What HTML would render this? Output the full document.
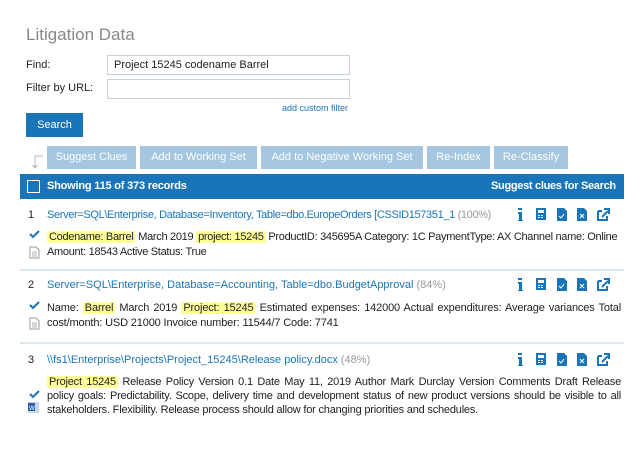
<!DOCTYPE html>
<html><head><meta charset="utf-8"><style>
body{margin:0;width:640px;height:450px;background:#fff;font-family:"Liberation Sans",sans-serif;font-size:11px;color:#222;position:relative;overflow:hidden}
.a{position:absolute;white-space:nowrap}
.inp{position:absolute;border:1px solid #c8d0d8;background:#fff;box-sizing:border-box}
.btn{position:absolute;top:146px;height:23px;background:#a4c6e0;color:#fff;font-size:11px;line-height:23px;text-align:center}
.lnk{color:#1a75b8}
.pct{color:#999}
.hl{background:#ffff99;padding:0 2px}
.txt{position:absolute;left:47px;width:574px;line-height:14.5px;text-align:justify;letter-spacing:-0.15px}
.sep{position:absolute;left:20px;width:604px;height:2px;background:#dbe6f1}
.ic{position:absolute}
</style></head><body>
<div class="a" style="left:26px;top:25px;font-size:17px;color:#888">Litigation Data</div>
<div class="a" style="left:26px;top:59px">Find:</div>
<div class="inp" style="left:107px;top:55px;width:243px;height:20px;padding:2px 6px;font-size:11px;line-height:14px">Project 15245 codename Barrel</div>
<div class="a" style="left:26px;top:82px">Filter by URL:</div>
<div class="inp" style="left:107px;top:79px;width:243px;height:20px"></div>
<div class="a lnk" style="left:282px;top:103px;font-size:9px">add custom filter</div>
<div class="a" style="left:26px;top:113px;width:57px;height:24px;background:#1a75b8;color:#fff;line-height:24px;text-align:center">Search</div>
<svg class="ic" style="left:29px;top:154px" width="16" height="16"><path d="M14 2H6V13" fill="none" stroke="#b0b8c0" stroke-width="1"/><path d="M3.5 11L6 14L8.5 11" fill="none" stroke="#b0b8c0"/></svg>
<div class="btn" style="left:47px;width:89px">Suggest Clues</div>
<div class="btn" style="left:140px;width:117px">Add to Working Set</div>
<div class="btn" style="left:261px;width:162px">Add to Negative Working Set</div>
<div class="btn" style="left:427px;width:63px">Re-Index</div>
<div class="btn" style="left:494px;width:74px">Re-Classify</div>
<div class="a" style="left:20px;top:174px;width:604px;height:25px;background:#1a75b8"></div>
<div class="a" style="left:27px;top:180px;width:11px;height:11px;border:1px solid #fff"></div>
<div class="a" style="left:47px;top:180px;color:#fff;font-weight:bold;font-size:11px;letter-spacing:-0.2px">Showing 115 of 373 records</div>
<div class="a" style="left:491px;top:180px;color:#fff;font-weight:bold;font-size:11px;letter-spacing:-0.3px">Suggest clues for Search</div>

<div class="a" style="left:28px;top:209px">1</div>
<div class="a lnk" style="left:47px;top:209px;letter-spacing:-0.35px">Server=SQL\Enterprise, Database=Inventory, Table=dbo.EuropeOrders [CSSID157351_1 <span class="pct">(100%)</span></div>
<div class="txt" style="top:230px;white-space:nowrap;letter-spacing:-0.3px"><span class="hl">Codename: Barrel</span> March 2019 <span class="hl">project: 15245</span> ProductID: 345695A Category: 1C PaymentType: AX Channel name: Online<br>Amount: 18543 Active Status: True</div>
<div class="sep" style="top:269px"></div>

<div class="a" style="left:28px;top:279px">2</div>
<div class="a lnk" style="left:47px;top:279px">Server=SQL\Enterprise, Database=Accounting, Table=dbo.BudgetApproval <span class="pct">(84%)</span></div>
<div class="txt" style="top:301px">Name: <span class="hl">Barrel</span> March 2019 <span class="hl">Project: 15245</span> Estimated expenses: 142000 Actual expenditures: Average variances Total cost/month: USD 21000 Invoice number: 11544/7 Code: 7741</div>
<div class="sep" style="top:342px"></div>

<div class="a" style="left:28px;top:354px">3</div>
<div class="a lnk" style="left:47px;top:354px">\\fs1\Enterprise\Projects\Project_15245\Release policy.docx <span class="pct">(48%)</span></div>
<div class="txt" style="top:375px;line-height:14px;letter-spacing:-0.2px"><span class="hl">Project 15245</span> Release Policy Version 0.1 Date May 11, 2019 Author Mark Durclay Version Comments Draft Release policy goals: Predictability. Scope, delivery time and development status of new product versions should be visible to all stakeholders. Flexibility. Release process should allow for changing priorities and schedules.</div>

<svg width="640" height="450" style="position:absolute;left:0;top:0;pointer-events:none">
<defs>
<g id="icons">
<path d="M518 2h4v2h-4zM518 6h4v8h1v1h-5v-1h1v-6h-1z" fill="#1a75b8"/>
<rect x="536" y="2" width="10" height="12" fill="#1a75b8"/><rect x="538" y="4" width="6" height="3" fill="#fff"/><rect x="538" y="9" width="2" height="1" fill="#fff"/><rect x="541" y="9" width="2" height="1" fill="#fff"/><rect x="538" y="11" width="2" height="1" fill="#fff"/><rect x="541" y="11" width="2" height="1" fill="#fff"/>
<path d="M557 2h7l3 3v10h-10z" fill="#1a75b8"/><path d="M559 10l2 2 3-4" stroke="#fff" fill="none"/>
<path d="M577 2h7l3 3v10h-10z" fill="#1a75b8"/><path d="M580 8l4 4M584 8l-4 4" stroke="#fff"/>
<path d="M598 5h4M598 5v9h9v-4" stroke="#1a75b8" stroke-width="2" fill="none"/><path d="M602 11l6-6M604 3h5v5" stroke="#1a75b8" stroke-width="2" fill="none"/>
</g>
<g id="chk"><path d="M30 4l3 3 6-6" stroke="#1a75b8" stroke-width="2" fill="none"/></g>
<g id="doc"><path d="M30 0h6l3 3v8h-9z" fill="#fff" stroke="#999"/><path d="M32 5h5M32 7h5M32 9h5" stroke="#999" stroke-width=".7"/></g>
</defs>
<use href="#icons" y="206"/>
<use href="#icons" y="276"/>
<use href="#icons" y="351"/>
<use href="#chk" y="230"/><use href="#doc" y="247"/>
<use href="#chk" y="301"/><use href="#doc" y="318"/>
<use href="#chk" y="390"/>
<rect x="28" y="402" width="11" height="11" fill="#c5d8ee"/><rect x="28" y="403" width="7" height="8" fill="#2b5fa8"/><text x="29" y="410" font-size="6" fill="#fff" font-family="Liberation Sans">W</text>
</svg>
</body></html>
